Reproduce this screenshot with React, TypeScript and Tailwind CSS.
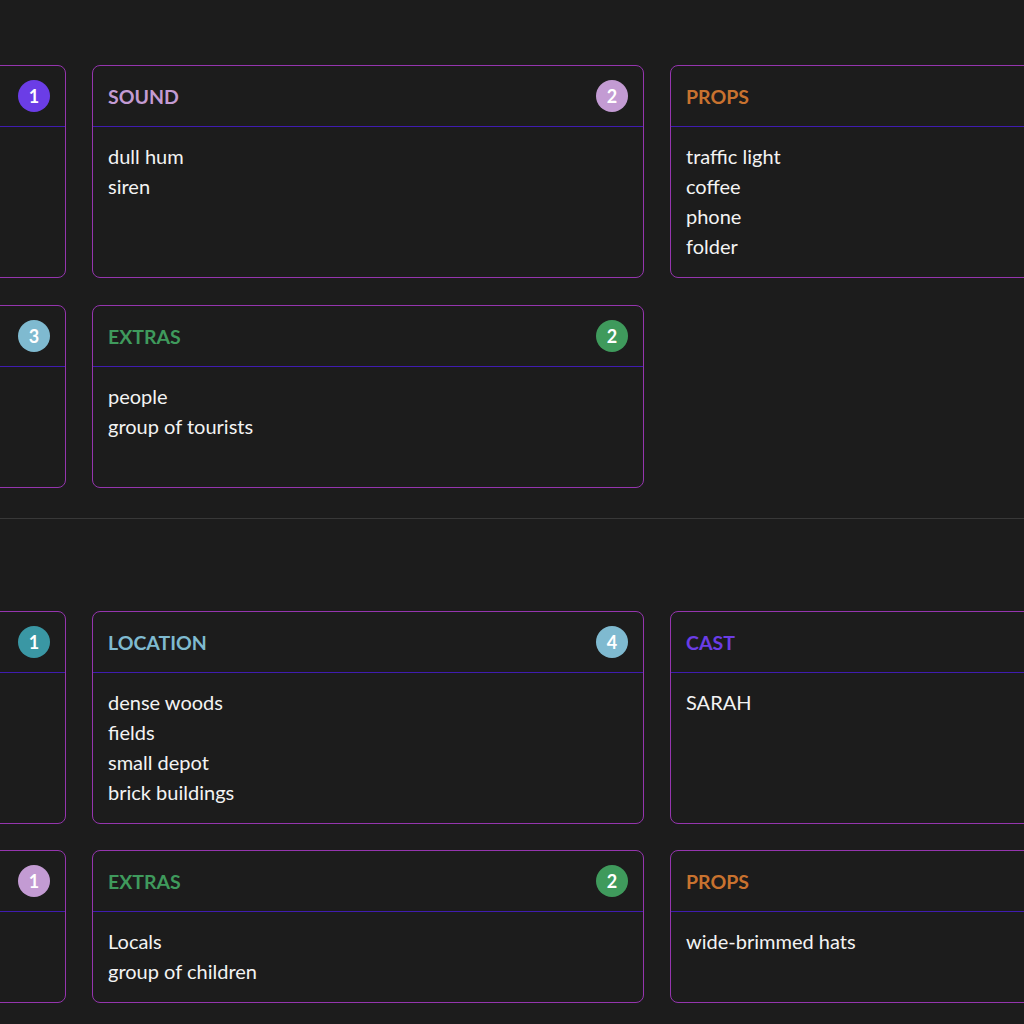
import React from "react";

type Card = {
  title: string;
  color: string;
  badge?: string;
  badgeNum?: number;
  items: string[];
};

const C = {
  cast: "#6b3de6",
  sound: "#c39bd3",
  props: "#c8722f",
  extras: "#3f9a5c",
  location: "#7fbad0",
  set: "#3a97a4",
};

function CardView({ card }: { card: Card | null }) {
  if (!card) return <div />;
  return (
    <div className="rounded-lg border border-[#9535ae] bg-[#1c1c1c] flex flex-col">
      <div className="h-[61px] px-[15px] flex items-center justify-between border-b border-[#3f1cb0]">
        <span className="text-[19.5px] font-bold pt-[2px]" style={{ color: card.color }}>
          {card.title}
        </span>
        {card.badgeNum !== undefined && (
          <span
            className="w-8 h-8 rounded-full flex items-center justify-center text-white text-[18px] font-bold"
            style={{ backgroundColor: card.badge }}
          >
            {card.badgeNum}
          </span>
        )}
      </div>
      <div className="px-[15px] pt-[14px] pb-[16px] text-[20px] leading-[30px] text-[#f3f3f3]">
        {card.items.map((it) => (
          <div key={it}>{it}</div>
        ))}
      </div>
    </div>
  );
}

function Grid({ rows, gapY }: { rows: (Card | null)[][]; gapY: string }) {
  return (
    <div className={`ml-[-486px] grid grid-cols-[552px_552px_552px] gap-x-[26px] ${gapY}`}>
      {rows.flat().map((c, i) => (
        <CardView key={i} card={c} />
      ))}
    </div>
  );
}

export default function App() {
  const top: (Card | null)[][] = [
    [
      { title: "CAST", color: C.cast, badge: C.cast, badgeNum: 1, items: ["JOHN"] },
      { title: "SOUND", color: C.sound, badge: C.sound, badgeNum: 2, items: ["dull hum", "siren"] },
      { title: "PROPS", color: C.props, badge: C.props, badgeNum: 4, items: ["traffic light", "coffee", "phone", "folder"] },
    ],
    [
      { title: "LOCATION", color: C.location, badge: C.location, badgeNum: 3, items: ["city street", "office", "crosswalk"] },
      { title: "EXTRAS", color: C.extras, badge: C.extras, badgeNum: 2, items: ["people", "group of tourists"] },
      null,
    ],
  ];
  const bottom: (Card | null)[][] = [
    [
      { title: "SET", color: C.set, badge: C.set, badgeNum: 1, items: ["forest road"] },
      { title: "LOCATION", color: C.location, badge: C.location, badgeNum: 4, items: ["dense woods", "fields", "small depot", "brick buildings"] },
      { title: "CAST", color: C.cast, badge: C.cast, badgeNum: 1, items: ["SARAH"] },
    ],
    [
      { title: "SOUND", color: C.sound, badge: C.sound, badgeNum: 1, items: ["birdsong"] },
      { title: "EXTRAS", color: C.extras, badge: C.extras, badgeNum: 2, items: ["Locals", "group of children"] },
      { title: "PROPS", color: C.props, badge: C.props, badgeNum: 1, items: ["wide-brimmed hats"] },
    ],
  ];
  return (
    <div
      className="w-[1024px] h-[1024px] overflow-hidden bg-[#1c1c1c]"
      style={{ fontFamily: "Lato, 'Noto Sans', sans-serif" }}
    >
      <div className="pt-[65px]">
        <Grid rows={top} gapY="gap-y-[27px]" />
        <div className="mt-[30px] h-px bg-[#383838]" />
        <div className="mt-[92px]">
          <Grid rows={bottom} gapY="gap-y-[26px]" />
        </div>
      </div>
    </div>
  );
}
